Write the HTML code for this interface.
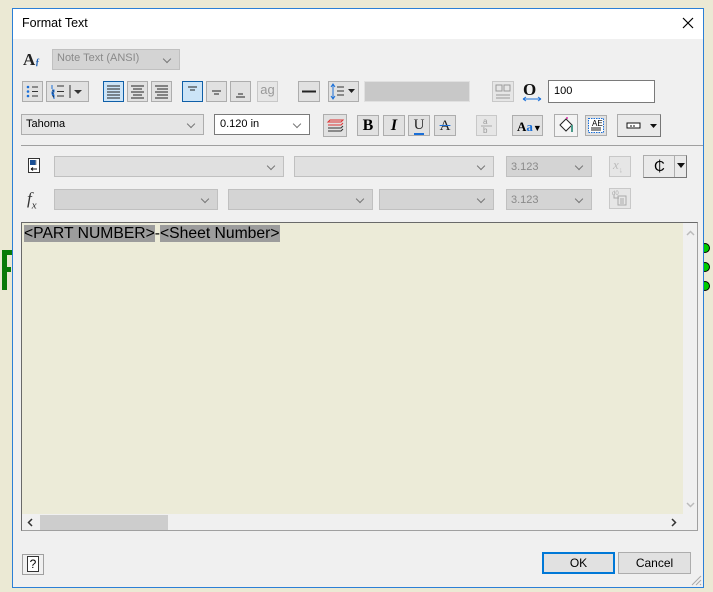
<!DOCTYPE html>
<html><head><style>
body{margin:0;width:713px;height:592px;background:#ebe9d4;position:relative;overflow:hidden;font-family:"Liberation Sans",sans-serif;font-size:12px}
.a{position:absolute;box-sizing:border-box}
.dlg{left:12px;top:8px;width:692px;height:580px;border:1px solid #2b7fd6;background:#f0f0f0}
.btn{border:1px solid #adadad;background:#e1e1e1}
.act{border:1px solid #0f5fa8;background:#cce4f7}
.dis{border:1px solid #c8c8c8;background:#e6e6e6}
.cb{border:1px solid #c0c0c0;background:#d4d4d4;color:#8a8a8a;padding:2px 4px;font-size:11px}
.cbw{border:1px solid #adadad;background:#e5e5e5;padding:3px 4px;font-size:11px}
.chev::after{content:"";position:absolute;right:9px;top:6px;width:5px;height:5px;border-right:1px solid #777;border-bottom:1px solid #777;transform:rotate(45deg)}
</style></head><body>
<div class="a" style="left:2px;top:250px;width:5px;height:40px;background:#0a7a0a"></div>
<div class="a" style="left:2px;top:250px;width:10px;height:5px;background:#0a7a0a"></div>
<div class="a" style="left:2px;top:267px;width:9px;height:5px;background:#0a7a0a"></div>
<div class="a" style="left:700px;top:243px;width:10px;height:10px;border-radius:50%;background:#0c0;border:1px solid #000"></div>
<div class="a" style="left:700px;top:262px;width:10px;height:10px;border-radius:50%;background:#0c0;border:1px solid #000"></div>
<div class="a" style="left:700px;top:281px;width:10px;height:10px;border-radius:50%;background:#0c0;border:1px solid #000"></div>
<div class="a dlg"></div>
<div class="a" style="left:13px;top:9px;width:690px;height:30px;background:#fff"></div>
<div class="a" style="left:22px;top:16px;font-size:12.5px;color:#000">Format Text</div>
<svg class="a" style="left:682px;top:17px" width="12" height="12"><path d="M1 1L11 11M11 1L1 11" stroke="#000" stroke-width="1.2"/></svg>

<!-- row1 -->
<div class="a" style="left:23px;top:50px;font:bold 17px 'Liberation Serif',serif;color:#222">A<span style="font-size:9px;color:#1a5fb4">ƒ</span></div>
<div class="a cb chev" style="left:52px;top:49px;width:128px;height:21px">Note Text (ANSI)</div>

<!-- row2 -->
<div class="a btn" style="left:22px;top:81px;width:21px;height:21px"><svg width="19" height="19"><g fill="#1a6fd8"><circle cx="5" cy="5" r="1.3"/><circle cx="5" cy="9.5" r="1.3"/><circle cx="5" cy="14" r="1.3"/></g><g stroke="#333"><path d="M9 5h6M9 9.5h6M9 14h6"/></g></svg></div>
<div class="a btn" style="left:46px;top:81px;width:43px;height:21px"><svg width="41" height="19"><g stroke="#1a6fd8"><path d="M5 3v4M5 8h2v2H5v2h2M5 13h2v4"/></g><path d="M10 4h7M10 9.5h7M10 14h7" stroke="#333"/><path d="M23 3v13" stroke="#333"/><path d="M27 8h8l-4 4z" fill="#333"/></svg></div>
<div class="a act" style="left:103px;top:81px;width:21px;height:21px"><svg width="19" height="19"><path d="M3 4h13M3 7h13M3 10h13M3 13h13M3 16h13" stroke="#222"/></svg></div>
<div class="a btn" style="left:127px;top:81px;width:21px;height:21px"><svg width="19" height="19"><path d="M3 4h13M5 7h9M3 10h13M5 13h9M3 16h13" stroke="#222"/></svg></div>
<div class="a btn" style="left:151px;top:81px;width:21px;height:21px"><svg width="19" height="19"><path d="M3 4h13M5 7h11M3 10h13M5 13h11M3 16h13" stroke="#222"/></svg></div>
<div class="a act" style="left:182px;top:81px;width:21px;height:21px"><svg width="19" height="19"><path d="M5 5h9M7 8h5" stroke="#222"/></svg></div>
<div class="a btn" style="left:206px;top:81px;width:21px;height:21px"><svg width="19" height="19"><path d="M5 9h9M7 12h5" stroke="#222"/></svg></div>
<div class="a btn" style="left:230px;top:81px;width:21px;height:21px"><svg width="19" height="19"><path d="M7 12h5M5 15h9" stroke="#222"/></svg></div>
<div class="a dis" style="left:257px;top:81px;width:21px;height:21px;color:#999;font-size:13px;text-align:center;line-height:16px">ag</div>
<div class="a btn" style="left:298px;top:81px;width:22px;height:21px"><svg width="20" height="19"><path d="M3 9.5h14" stroke="#222" stroke-width="2"/></svg></div>
<div class="a btn" style="left:328px;top:81px;width:31px;height:21px"><svg width="29" height="19"><path d="M4 3v13" stroke="#1a6fd8"/><path d="M2 5l2-3 2 3M2 14l2 3 2-3" stroke="#1a6fd8" fill="none"/><path d="M8 5h7M8 9h7M8 13h7" stroke="#333"/><path d="M19 7h7l-3.5 4z" fill="#222"/></svg></div>
<div class="a" style="left:364px;top:81px;width:106px;height:21px;background:#c8c8c8;border:1px solid #e0e0e0"></div>
<div class="a dis" style="left:492px;top:81px;width:22px;height:21px"><svg width="20" height="19"><g stroke="#999" fill="none"><rect x="3" y="3" width="6" height="6"/><rect x="11" y="3" width="6" height="6"/><path d="M3 13h14M3 16h14"/></g></svg></div>
<div class="a" style="left:523px;top:80px;font:bold 17px 'Liberation Serif',serif;color:#111">O</div>
<svg class="a" style="left:522px;top:96px" width="20" height="6"><path d="M1 3h18M1 3l3-2M1 3l3 2M19 3l-3-2M19 3l-3 2" stroke="#1a6fd8"/></svg>
<div class="a" style="left:548px;top:80px;width:107px;height:23px;background:#fff;border:1px solid #7a7a7a;padding:4px 5px;font-size:11px">100</div>

<!-- row3 -->
<div class="a cbw chev" style="left:21px;top:114px;width:183px;height:21px">Tahoma</div>
<div class="a chev" style="left:214px;top:114px;width:96px;height:21px;background:#fff;border:1px solid #7a7a7a;padding:3px 5px;font-size:11px">0.120 in</div>
<div class="a btn" style="left:323px;top:114px;width:24px;height:23px"><svg width="22" height="21"><path d="M4 7h13l2-2H6zM4 10h13l2-2" stroke="#d33" fill="none"/><path d="M4 13h13l2-2M4 16h13l2-2" stroke="#333" fill="none"/></svg></div>
<div class="a btn" style="left:357px;top:115px;width:22px;height:21px;font:bold 16px 'Liberation Serif',serif;text-align:center;line-height:20px">B</div>
<div class="a btn" style="left:383px;top:115px;width:22px;height:21px;font:italic bold 16px 'Liberation Serif',serif;text-align:center;line-height:20px">I</div>
<div class="a btn" style="left:408px;top:115px;width:22px;height:21px;font:15px 'Liberation Serif',serif;text-align:center;line-height:18px;color:#222"><span style="border-bottom:2px solid #1a6fd8">U</span></div>
<div class="a btn" style="left:434px;top:115px;width:22px;height:21px;font:15px 'Liberation Serif',serif;text-align:center;line-height:20px;color:#222;text-decoration:line-through;text-decoration-color:#1a6fd8">A</div>
<div class="a dis" style="left:476px;top:115px;width:21px;height:21px"><svg width="19" height="19"><text x="6" y="8" font-size="8" fill="#999" font-family="Liberation Sans">a</text><path d="M4 10h11" stroke="#aaa"/><text x="6" y="17" font-size="8" fill="#999" font-family="Liberation Sans">b</text></svg></div>
<div class="a btn" style="left:512px;top:115px;width:31px;height:21px;font:bold 13px 'Liberation Serif',serif;padding:3px 0 0 4px">A<span style="color:#1a6fd8">a</span><span style="font-size:9px">▼</span></div>
<div class="a btn" style="left:554px;top:114px;width:24px;height:23px;background:#f3f3f3"><svg width="22" height="21"><path d="M5 10l6-6 6 6-6 6z" stroke="#222" fill="#fff"/><path d="M17 10v7" stroke="#4a9a8a" stroke-width="2"/><circle cx="12" cy="3" r="1" fill="#d3a"/></svg></div>
<div class="a btn" style="left:585px;top:115px;width:22px;height:21px"><svg width="20" height="19"><rect x="2.5" y="2.5" width="15" height="14" stroke="#1a6fd8" stroke-dasharray="1.5 1" fill="#fff"/><text x="6" y="10" font-size="8" font-family="Liberation Sans">AE</text><path d="M5 12h10M5 14h10" stroke="#222"/></svg></div>
<div class="a btn" style="left:617px;top:114px;width:44px;height:23px;background:#eaeaea;border-right-color:#777;border-bottom-color:#777"><svg width="42" height="21"><rect x="9" y="8" width="13" height="5" stroke="#111" fill="#fff"/><path d="M12 11h2M15 11h2" stroke="#111"/><path d="M32 9h7l-3.5 4z" fill="#111"/></svg></div>

<div class="a" style="left:21px;top:145px;width:682px;height:1px;background:#a0a0a0"></div>

<!-- row4 -->
<svg class="a" style="left:27px;top:157px" width="15" height="18"><rect x="1.5" y="1.5" width="11" height="14" stroke="#333" fill="#fff"/><rect x="3" y="3" width="6" height="5" fill="#1a4f94"/><path d="M9 3v5" stroke="#999"/><path d="M4 12h6M4 12l2-1.5M4 12l2 1.5" stroke="#111"/></svg>
<div class="a cb chev" style="left:54px;top:156px;width:230px;height:21px;background:#e0e0e0"></div>
<div class="a cb chev" style="left:294px;top:156px;width:200px;height:21px;background:#e0e0e0"></div>
<div class="a cb chev" style="left:506px;top:156px;width:86px;height:21px;padding-top:4px">3.123</div>
<div class="a dis" style="left:609px;top:156px;width:22px;height:21px;color:#bbb;font:italic 13px 'Liberation Serif',serif;padding-left:3px">x<sub style="font-size:8px">↓</sub></div>
<div class="a btn" style="left:643px;top:155px;width:44px;height:23px;background:#eaeaea;border-right-color:#777;border-bottom-color:#777"><div class="a" style="left:10px;top:2px;font-size:15px">₵</div><div class="a" style="left:30px;top:0;width:1px;height:21px;background:#adadad"></div><svg class="a" style="left:33px;top:7px" width="9" height="6"><path d="M0 0h8L4 5z" fill="#111"/></svg></div>

<!-- row5 -->
<div class="a" style="left:27px;top:189px;font:italic 17px 'Liberation Serif',serif;color:#333">f<sub style="font-size:11px">x</sub></div>
<div class="a cb chev" style="left:54px;top:189px;width:164px;height:21px"></div>
<div class="a cb chev" style="left:228px;top:189px;width:145px;height:21px"></div>
<div class="a cb chev" style="left:379px;top:189px;width:115px;height:21px"></div>
<div class="a cb chev" style="left:506px;top:189px;width:86px;height:21px;padding-top:4px">3.123</div>
<div class="a dis" style="left:609px;top:188px;width:22px;height:21px"><svg width="20" height="19"><g stroke="#aaa" fill="none"><rect x="8" y="7" width="8" height="9"/><path d="M10 10h4M10 12h4M10 14h4M4 6v3h5"/></g><text x="2" y="6" font-size="6" fill="#aaa">d0</text></svg></div>

<!-- text area -->
<div class="a" style="left:21px;top:222px;width:677px;height:309px;border:1px solid #a0a0a0;border-left-color:#696969;border-top-color:#696969;background:#ecebd8"></div>
<div class="a" style="left:24px;top:224px;font-size:15.7px;line-height:20px;color:#000"><span style="background:#9c9c9c">&lt;PART NUMBER&gt;</span>-<span style="background:#9c9c9c">&lt;Sheet Number&gt;</span></div>
<div class="a" style="left:683px;top:223px;width:14px;height:291px;background:#f0f0f0"></div>
<svg class="a" style="left:686px;top:230px" width="9" height="6"><path d="M1 5l3.5-3.5L8 5" stroke="#bbb" stroke-width="1.5" fill="none"/></svg>
<svg class="a" style="left:686px;top:502px" width="9" height="6"><path d="M1 1l3.5 3.5L8 1" stroke="#bbb" stroke-width="1.5" fill="none"/></svg>
<div class="a" style="left:22px;top:514px;width:675px;height:16px;background:#f0f0f0"></div>
<div class="a" style="left:40px;top:515px;width:128px;height:15px;background:#cdcdcd"></div>
<svg class="a" style="left:27px;top:518px" width="6" height="9"><path d="M5 1L1.5 4.5L5 8" stroke="#333" stroke-width="1.5" fill="none"/></svg>
<svg class="a" style="left:671px;top:518px" width="6" height="9"><path d="M1 1l3.5 3.5L1 8" stroke="#333" stroke-width="1.5" fill="none"/></svg>

<!-- bottom -->
<div class="a" style="left:22px;top:554px;width:22px;height:21px;border:1px solid #a0a0a0;background:#f0f0f0;text-align:center;font-size:12px;line-height:18px"><span style="border:1px solid #333;padding:0 2px;background:#fff">?</span></div>
<div class="a" style="left:542px;top:552px;width:73px;height:22px;border:2px solid #0078d7;background:#e1e1e1;text-align:center;line-height:18px;font-size:12px">OK</div>
<div class="a btn" style="left:618px;top:552px;width:73px;height:22px;text-align:center;line-height:20px;font-size:12px">Cancel</div>
<svg class="a" style="left:690px;top:574px" width="12" height="12"><path d="M11 2L2 11M11 6L6 11M11 10L10 11" stroke="#aaa"/></svg>
</body></html>
